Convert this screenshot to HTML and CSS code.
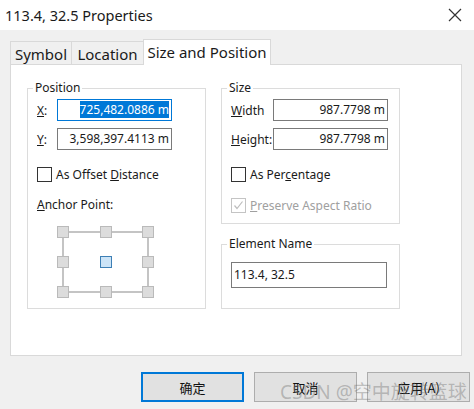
FILE: index.html
```html
<!DOCTYPE html>
<html lang="en">
<head>
  <meta charset="UTF-8" />
  <title>113.4, 32.5 Properties</title>
  <link rel="stylesheet" href="styles.css">
</head>
<body>
  <div class="dialog">
    <div class="titlebar">
      <span class="title">113.4, 32.5 Properties</span>
      <svg class="close" width="14" height="14" viewBox="0 0 14 14">
        <path d="M1 1 L13 13 M13 1 L1 13" stroke="#333" stroke-width="1.2" fill="none" />
      </svg>
    </div>

    <div class="content">
      <div class="tabs">
        <div class="tab">Symbol</div>
        <div class="tab">Location</div>
        <div class="tab active">Size and Position</div>
      </div>

      <div class="panel">
        <fieldset class="group position">
          <legend>Position</legend>
          <div class="field">
            <label><u>X</u>:</label>
            <div class="input focused"><span class="selected">725,482.0886 m</span></div>
          </div>
          <div class="field">
            <label><u>Y</u>:</label>
            <div class="input">3,598,397.4113 m</div>
          </div>
          <div class="check first">
            <span class="box"></span>
            <span>As Offset <u>D</u>istance</span>
          </div>
          <div class="caption"><u>A</u>nchor Point:</div>
          <svg class="anchor" width="104" height="76" viewBox="0 0 104 76">
            <rect x="8" y="7" width="85" height="60" fill="none" stroke="#c4c4c4" stroke-width="2" />
            <g fill="#dcdcdc" stroke="#bababa">
              <rect x="2.5" y="1.5" width="11" height="11" />
              <rect x="45.5" y="1.5" width="11" height="11" />
              <rect x="87.5" y="1.5" width="11" height="11" />
              <rect x="2.5" y="31.5" width="11" height="11" />
              <rect x="87.5" y="31.5" width="11" height="11" />
              <rect x="2.5" y="61.5" width="11" height="11" />
              <rect x="45.5" y="61.5" width="11" height="11" />
              <rect x="87.5" y="61.5" width="11" height="11" />
            </g>
            <rect x="45.5" y="31.5" width="11" height="11" fill="#cce4f7" stroke="#3d7fb5" />
          </svg>
        </fieldset>

        <div class="side">
          <fieldset class="group size">
            <legend>Size</legend>
            <div class="field">
              <label><u>W</u>idth</label>
              <div class="input">987.7798 m</div>
            </div>
            <div class="field">
              <label><u>H</u>eight:</label>
              <div class="input">987.7798 m</div>
            </div>
            <div class="check first">
              <span class="box"></span>
              <span>As Per<u>c</u>entage</span>
            </div>
            <div class="check disabled">
              <span class="box">
                <svg width="11" height="11" viewBox="0 0 11 11">
                  <path d="M1.5 5.5 L4 8.5 L9.5 1.5" stroke="#bdbdbd" stroke-width="1.2" fill="none" />
                </svg>
              </span>
              <span><u>P</u>reserve Aspect Ratio</span>
            </div>
          </fieldset>

          <fieldset class="group name">
            <legend>Element Name</legend>
            <div class="input wide">113.4, 32.5</div>
          </fieldset>
        </div>
      </div>

      <div class="buttons">
        <button class="default">确定</button>
        <button>取消</button>
        <button>应用(A)</button>
      </div>
    </div>

    <div class="watermark">CSDN @空中旋转篮球</div>
  </div>
</body>
</html>
```

FILE: styles.css
```css
body {
  margin: 0;
  font-family: "Noto Sans", "Noto Sans CJK SC", sans-serif;
  font-size: 12px;
  color: #1a1a1a;
  background: #f0f0f0;
}
.dialog {
  position: relative;
  width: 474px;
  height: 409px;
  overflow: hidden;
}
.titlebar {
  height: 30px;
  background: #fff;
  display: flex;
  align-items: center;
  justify-content: space-between;
  padding: 0 12px 0 5px;
}
.title {
  font-size: 14.5px;
}
.content {
  padding: 9px 12px 0 10px;
}
.tabs {
  display: flex;
  align-items: flex-end;
  height: 25px;
}
.tab {
  box-sizing: border-box;
  height: 23px;
  line-height: 24px;
  text-align: center;
  font-size: 15px;
  border: 1px solid #d9d9d9;
  border-bottom: none;
  background: #f0f0f0;
  margin-right: -1px;
}
.tab:nth-child(1) { width: 62px; }
.tab:nth-child(2) { width: 73px; }
.tab.active {
  height: 26px;
  line-height: 24px;
  width: 128px;
  background: #fff;
  position: relative;
  z-index: 1;
  margin-bottom: -1px;
}
.panel {
  height: 275px;
  background: #fff;
  border: 1px solid #d9d9d9;
  padding: 15px 0 0 16px;
  display: grid;
  grid-template-columns: 179px 179px;
  column-gap: 15px;
  align-items: stretch;
}
.group {
  margin: 0;
  border: 1px solid #dcdcdc;
  padding: 3px 11px 0 9px;
  min-width: 0;
}
.group legend {
  margin-left: -4px;
  padding: 0 2px;
  line-height: 16px;
}
.position {
  height: 229px;
  box-sizing: border-box;
}
.side {
  display: flex;
  flex-direction: column;
}
.size {
  height: 144px;
  box-sizing: border-box;
}
.name {
  margin-top: 12px;
  height: 73px;
  box-sizing: border-box;
  padding-top: 10px;
}
.field {
  display: flex;
  align-items: center;
  justify-content: space-between;
  height: 22px;
  margin-bottom: 7px;
}
.position .field {
  padding-right: 22px;
}
.input {
  width: 109px;
  height: 20px;
  line-height: 20px;
  border: 1px solid #7a7a7a;
  text-align: right;
  padding: 0 2px;
  font-size: 12px;
  white-space: nowrap;
}
.input.focused {
  border-color: #0078d7;
}
.selected {
  background: #0078d7;
  color: #fff;
}
.input.wide {
  width: 150px;
  height: 24px;
  line-height: 24px;
  text-align: left;
}
.check {
  display: flex;
  align-items: center;
  gap: 4px;
  height: 16px;
}
.check.first {
  margin-top: 16px;
}
.box {
  width: 13px;
  height: 13px;
  border: 1px solid #333;
  background: #fff;
  display: flex;
  align-items: center;
  justify-content: center;
}
.check.disabled {
  margin-top: 15px;
  color: #a0a0a0;
}
.check.disabled .box {
  border-color: #c4c4c4;
}
.caption {
  margin-top: 15px;
  height: 16px;
  line-height: 16px;
}
.anchor {
  display: block;
  margin: 12px 0 0 18px;
}
.buttons {
  display: flex;
  justify-content: flex-end;
  gap: 10px;
  margin: 16px -8px 0 0;
}
.buttons button {
  width: 103px;
  height: 30px;
  background: #e1e1e1;
  border: 1px solid #adadad;
  font-family: "Noto Sans CJK SC", sans-serif;
  font-size: 13px;
  color: #111;
}
.buttons button.default {
  border: 2px solid #0078d7;
}
.watermark {
  position: absolute;
  left: 280px;
  top: 377px;
  font-family: "Noto Sans", "Noto Sans CJK SC", sans-serif;
  font-size: 19px;
  color: rgba(110, 110, 110, 0.4);
  white-space: nowrap;
}
```
